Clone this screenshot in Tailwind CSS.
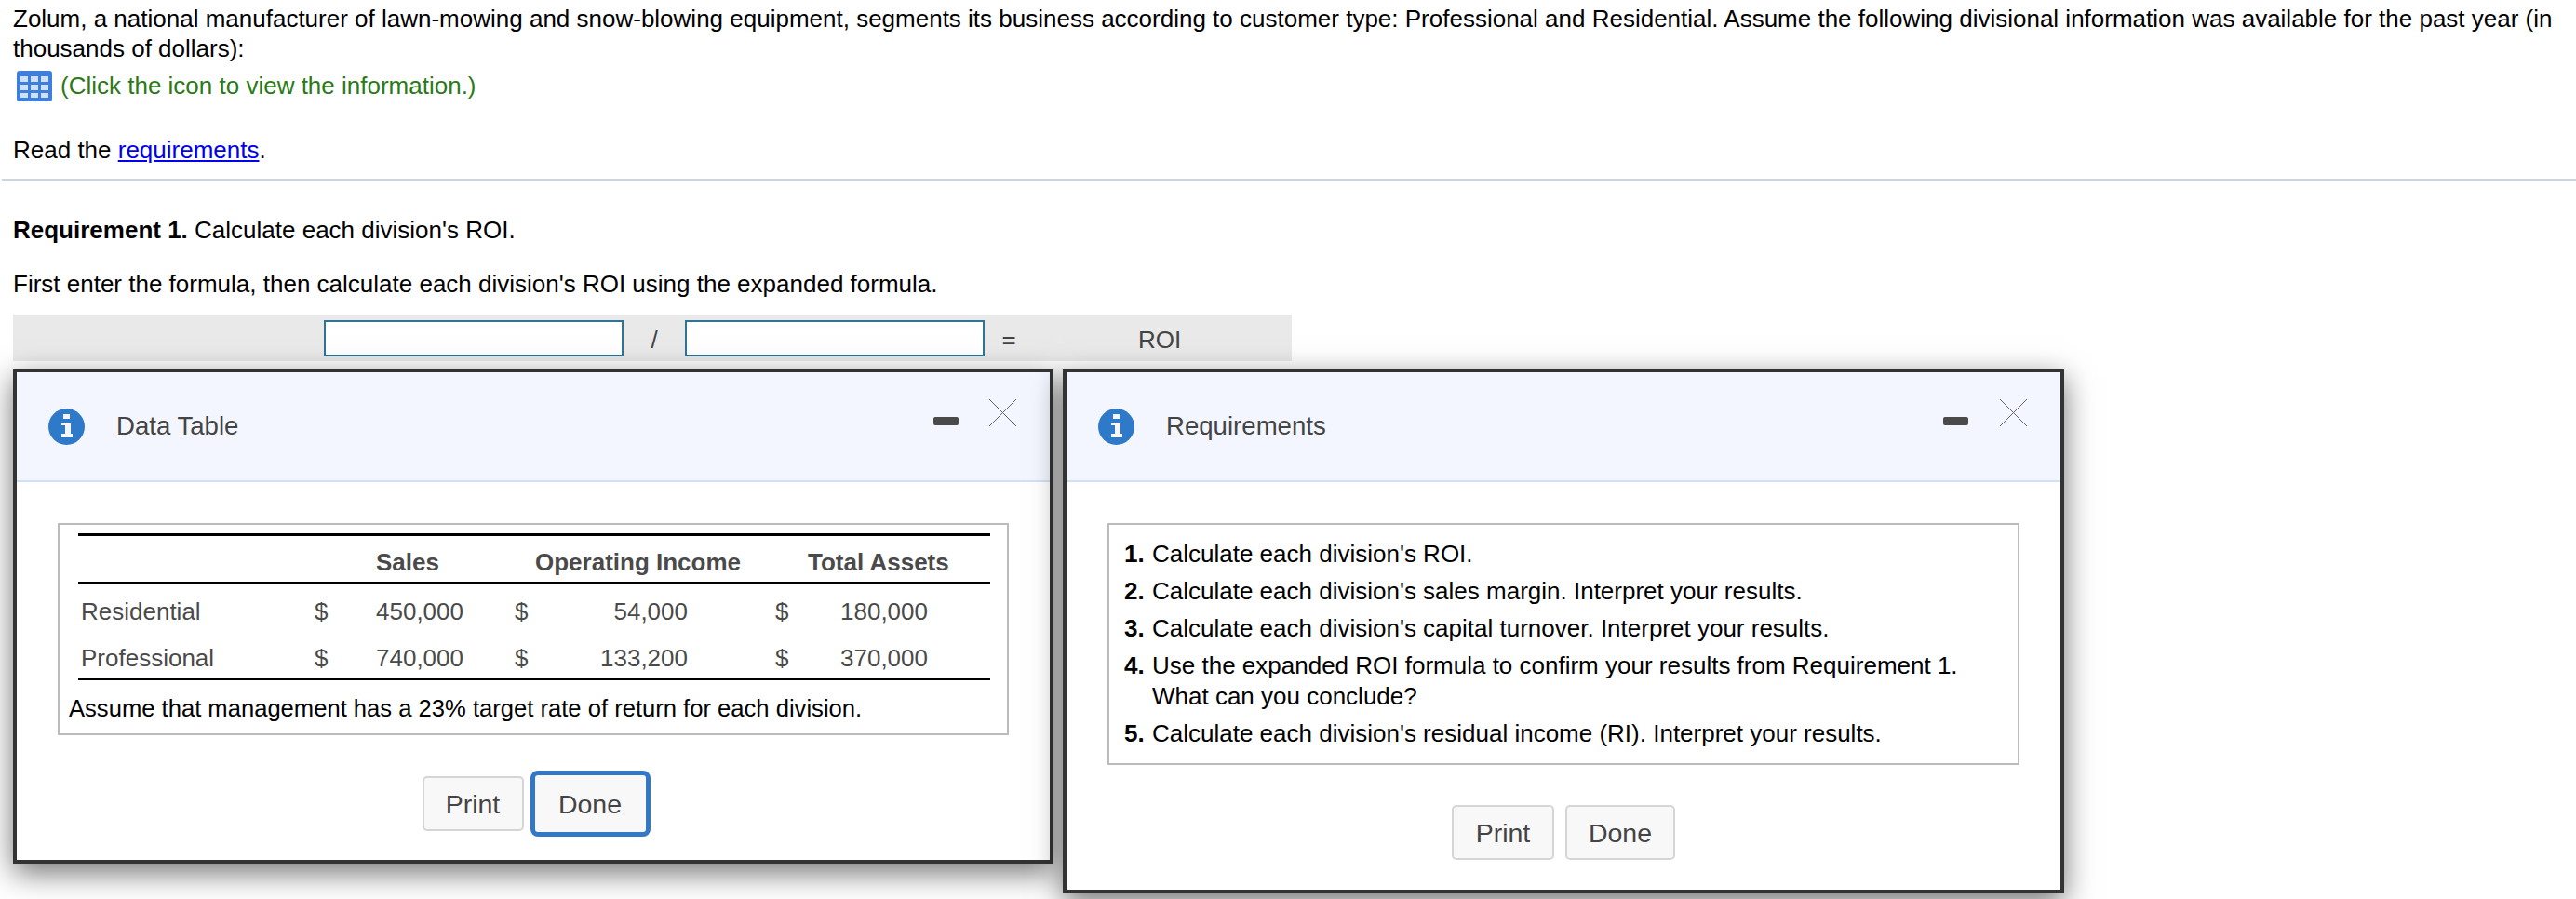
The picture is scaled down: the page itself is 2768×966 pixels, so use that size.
<!DOCTYPE html>
<html lang="en">
<head>
    <meta charset="UTF-8">
    <title>Division ROI</title>
    <script src="https://cdn.jsdelivr.net/npm/@tailwindcss/browser@4"></script>
</head>
<body class="relative w-[2768px] h-[966px] overflow-hidden bg-white text-black font-['Liberation_Sans',Arial,sans-serif] text-[26px] leading-[34px]">
    <!-- question text -->
    <div class="pt-[2px]">
        <p class="pl-[14px] pr-[10px] leading-[32px] pt-[2px]">Zolum, a national manufacturer of lawn-mowing and snow-blowing equipment, segments its business according to customer type: Professional and Residential. Assume the following divisional information was available for the past year (in thousands of dollars):</p>
        <div class="flex items-center pl-[18px] mt-[7px] h-[34px] text-[#2b7a16]">
            <svg class="w-[38px] h-[33px]" viewBox="0 0 38 33">
                <rect width="38" height="33" rx="3" fill="#3f7fdc"/>
                <g fill="#cfe0fa">
                    <rect x="4" y="6" width="8" height="6"/><rect x="15" y="6" width="8" height="6"/><rect x="26" y="6" width="8" height="6"/>
                    <rect x="4" y="15" width="8" height="6"/><rect x="15" y="15" width="8" height="6"/><rect x="26" y="15" width="8" height="6"/>
                    <rect x="4" y="24" width="8" height="5"/><rect x="15" y="24" width="8" height="5"/><rect x="26" y="24" width="8" height="5"/>
                </g>
            </svg>
            <span class="ml-[9px]">(Click the icon to view the information.)</span>
        </div>
        <p class="pl-[14px] mt-[35px]">Read the <a class="text-[#0000ee] underline">requirements</a>.</p>
        <div class="ml-[2px] mt-[14px] h-[2px] bg-[#ced3e0]"></div>
        <p class="pl-[14px] mt-[36px]"><b>Requirement 1.</b> Calculate each division's ROI.</p>
        <p class="pl-[14px] mt-[24px]">First enter the formula, then calculate each division's ROI using the expanded formula.</p>
        <div class="flex items-center ml-[14px] mt-[16px] w-[1374px] h-[50px] bg-[#e9e9e9] text-[#444]">
            <div class="ml-[334px] w-[322px] h-[39px] bg-white border-2 border-[#2f7395]"></div>
            <span class="w-[66px] text-center pt-[3px]">/</span>
            <div class="w-[322px] h-[39px] bg-white border-2 border-[#2f7395]"></div>
            <span class="w-[52px] text-center pt-[3px]">=</span>
            <span class="w-[272px] text-center pt-[3px]">ROI</span>
        </div>
    </div>

    <!-- Data Table window -->
    <section class="absolute left-[14px] top-[396px] w-[1118px] h-[532px] bg-white border-4 border-[#333] shadow-[0_10px_30px_rgba(0,0,0,0.55)] flex flex-col">
        <header class="flex items-center h-[118px] shrink-0 bg-[#f3f6fe] border-b-2 border-[#cfe3f5] pl-[34px] text-[#444] text-[27.6px]">
            <svg class="w-[39px] h-[39px]" viewBox="0 0 39 39">
                <circle cx="19.5" cy="19.5" r="19.5" fill="#2f79c9"/>
                <path fill="#f3f6fe" d="M16 6h7v5h-7zM14 15h10v12h2v4H14v-4h4v-9h-4z"/>
            </svg>
            <span class="ml-[34px]">Data Table</span>
            <div class="ml-auto mr-[98px] mt-[-12px] w-[27px] h-[9px] rounded-[2px] bg-[#4a4a4a]"></div>
        </header>
        <svg class="absolute left-[1044px] top-[28px] w-[31px] h-[31px]" viewBox="0 0 31 31"><path d="M1 1l29 29M30 1L1 30" stroke="#666" fill="none"/></svg>

        <div class="mx-[44px] mt-[44px] h-[228px] border-2 border-[#bbb] px-[20px] pt-[9px]">
            <div class="grid grid-cols-[254px_66px_149px_22px_164px_94px_164px_67px] text-[#4a4a4a]">
                <div class="col-span-8 border-t-[3px] border-black"></div>
                <div class="col-span-8 grid grid-cols-subgrid items-center h-[52px] pt-[6px] border-b-[3px] border-black font-bold">
                    <span class="col-start-3">Sales</span>
                    <span class="col-start-5 col-span-2">Operating Income</span>
                    <span class="col-start-7 col-span-2 ml-[35px]">Total Assets</span>
                </div>
                <span class="flex items-center h-[50px] pt-[8px] pl-[3px]">Residential</span>
                <span class="flex items-center h-[50px] pt-[8px]">$</span>
                <span class="flex items-center h-[50px] pt-[8px]">450,000</span>
                <span class="flex items-center h-[50px] pt-[8px]">$</span>
                <span class="flex items-center justify-end h-[50px] pt-[8px]">54,000</span>
                <span class="flex items-center justify-between h-[50px] pt-[8px] col-start-7"><span>$</span><span>180,000</span></span>
                <span class="h-[50px]"></span>
                <span class="flex items-center h-[50px] pt-[8px] pl-[3px]">Professional</span>
                <span class="flex items-center h-[50px] pt-[8px]">$</span>
                <span class="flex items-center h-[50px] pt-[8px]">740,000</span>
                <span class="flex items-center h-[50px] pt-[8px]">$</span>
                <span class="flex items-center justify-end h-[50px] pt-[8px]">133,200</span>
                <span class="flex items-center justify-between h-[50px] pt-[8px] col-start-7"><span>$</span><span>370,000</span></span>
                <span class="h-[50px]"></span>
                <div class="col-span-8 border-t-[3px] border-black"></div>
            </div>
            <p class="mt-[13px] ml-[-10px] text-[25.6px]">Assume that management has a 23% target rate of return for each division.</p>
        </div>

        <div class="flex justify-center items-center gap-[7px] mt-[38px] ml-[6px] text-[28.5px]">
            <button class="w-[109px] h-[59px] rounded-[5px] border-2 border-[#d5d5d5] bg-[#f8f8f8] text-[#444]">Print</button>
            <button class="w-[129px] h-[71px] rounded-[8px] border-[5px] border-[#3178c6] bg-[#f8f8f8] text-[#444]">Done</button>
        </div>
    </section>

    <!-- Requirements window -->
    <section class="absolute left-[1142px] top-[396px] w-[1076px] h-[564px] bg-white border-4 border-[#333] shadow-[0_10px_30px_rgba(0,0,0,0.55)] flex flex-col">
        <header class="flex items-center h-[118px] shrink-0 bg-[#f3f6fe] border-b-2 border-[#cfe3f5] pl-[34px] text-[#444] text-[27.6px]">
            <svg class="w-[39px] h-[39px]" viewBox="0 0 39 39">
                <circle cx="19.5" cy="19.5" r="19.5" fill="#2f79c9"/>
                <path fill="#f3f6fe" d="M16 6h7v5h-7zM14 15h10v12h2v4H14v-4h4v-9h-4z"/>
            </svg>
            <span class="ml-[34px]">Requirements</span>
            <div class="ml-auto mr-[99px] mt-[-12px] w-[27px] h-[9px] rounded-[2px] bg-[#4a4a4a]"></div>
        </header>
        <svg class="absolute left-[1002px] top-[28px] w-[31px] h-[31px]" viewBox="0 0 31 31"><path d="M1 1l29 29M30 1L1 30" stroke="#666" fill="none"/></svg>

        <div class="mx-[44px] mt-[44px] h-[260px] border-2 border-[#bbb] pl-[16px] pt-[15px]">
            <ol class="flex flex-col gap-[7px] leading-[33px]">
                <li class="flex"><b class="w-[30px] shrink-0">1.</b><span>Calculate each division's ROI.</span></li>
                <li class="flex"><b class="w-[30px] shrink-0">2.</b><span>Calculate each division's sales margin. Interpret your results.</span></li>
                <li class="flex"><b class="w-[30px] shrink-0">3.</b><span>Calculate each division's capital turnover. Interpret your results.</span></li>
                <li class="flex"><b class="w-[30px] shrink-0">4.</b><span>Use the expanded ROI formula to confirm your results from Requirement 1.<br>What can you conclude?</span></li>
                <li class="flex"><b class="w-[30px] shrink-0">5.</b><span>Calculate each division's residual income (RI). Interpret your results.</span></li>
            </ol>
        </div>

        <div class="flex justify-center gap-[12px] mt-[43px] text-[28.5px]">
            <button class="w-[110px] h-[59px] rounded-[5px] border-2 border-[#d5d5d5] bg-[#f8f8f8] text-[#444]">Print</button>
            <button class="w-[118px] h-[59px] rounded-[5px] border-2 border-[#d5d5d5] bg-[#f8f8f8] text-[#444]">Done</button>
        </div>
    </section>
</body>
</html>
